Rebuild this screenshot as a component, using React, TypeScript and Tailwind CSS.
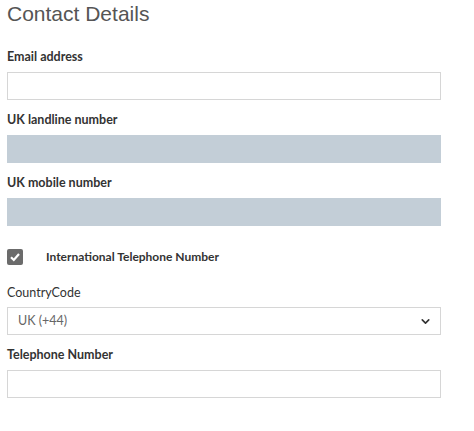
import { ChevronDown } from 'lucide-react';

const font = { fontFamily: 'Lato, "Open Sans", sans-serif' };

function Field({ label, filled }: { label: string; filled?: boolean }) {
    return (
        <div className="flex flex-col mb-[12px]">
            <label className="text-[12.5px] leading-[16px] font-bold text-[#333] mb-[7px]">{label}</label>
            <div
                className={`h-[28px] w-[434px] ${filled ? 'bg-[#c3ced7]' : 'bg-white border border-[#d6d6d6]'}`}
            />
        </div>
    );
}

export default function App() {
    return (
        <div className="w-[474px] h-[431px] bg-white px-[7px]" style={font}>
            <h1
                className="text-[21px] leading-[26px] text-[#555] font-normal pt-[1px] mb-[22px]"
                style={{ fontFamily: '"Liberation Sans", Arial, sans-serif' }}
            >
                Contact Details
            </h1>
            <Field label="Email address" />
            <Field label="UK landline number" filled />
            <Field label="UK mobile number" filled />
            <div className="flex items-center h-[18px] mt-[22px] mb-[19px]">
                <span className="w-[16px] h-[16px] rounded-[2px] bg-[#6b6b6b] flex items-center justify-center">
                    <svg width="12" height="12" viewBox="0 0 12 12">
                        <path d="M2 6.2 L4.8 9 L10 3" stroke="white" strokeWidth="2.2" fill="none" />
                    </svg>
                </span>
                <span className="ml-[23px] text-[12px] font-bold text-[#333]">International Telephone Number</span>
            </div>
            <div className="flex flex-col mb-[12px]">
                <label className="text-[12.5px] leading-[16px] text-[#333] mb-[6px]">CountryCode</label>
                <div className="h-[28px] w-[434px] border border-[#d6d6d6] flex items-center justify-between px-[10px]">
                    <span className="text-[12.5px] text-[#666]">UK (+44)</span>
                    <ChevronDown size={13} strokeWidth={3} className="text-[#333] -mr-[2px]" />
                </div>
            </div>
            <Field label="Telephone Number" />
        </div>
    );
}
